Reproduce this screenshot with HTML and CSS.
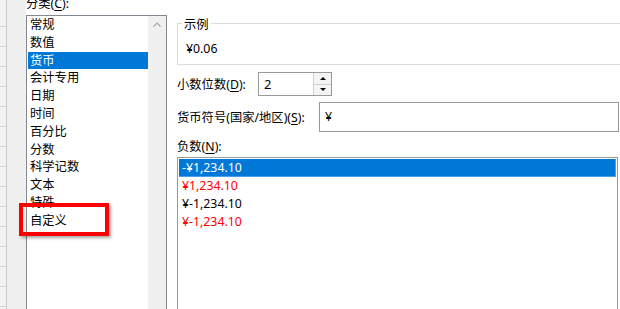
FILE: index.html
```html
<!DOCTYPE html>
<html lang="zh-CN">
<head>
    <meta charset="UTF-8">
    <meta name="viewport" content="width=device-width, initial-scale=1.0">
    <title>设置单元格格式</title>
    <link rel="stylesheet" href="styles.css">
</head>
<body>
    <div class="window">
        <div class="sheet"></div> <!-- edge of the worksheet behind the dialog -->

        <div class="dialog">
            <div class="category">
                <div class="caption">分类(<u>C</u>):</div>
                <div class="listbox">
                    <ul class="items">
                        <li>常规</li>
                        <li>数值</li>
                        <li class="selected">货币</li>
                        <li>会计专用</li>
                        <li>日期</li>
                        <li>时间</li>
                        <li>百分比</li>
                        <li>分数</li>
                        <li>科学记数</li>
                        <li>文本</li>
                        <li>特殊</li>
                        <li class="marked">自定义</li>
                    </ul>
                    <div class="scrollbar">
                        <svg class="chevron" width="8" height="5" viewBox="0 0 8 5">
                            <path d="M0.5 4.5 L4 1 L7.5 4.5" fill="none" stroke="#a6a6a6" stroke-width="1.2"/>
                        </svg>
                    </div>
                </div>
            </div>

            <div class="settings">
                <div class="sample">
                    <div class="sample-title">示例</div>
                    <div class="sample-value">¥0.06</div>
                </div>

                <div class="field decimals">
                    <label>小数位数(<u>D</u>):</label>
                    <div class="spin">
                        <span class="spin-value">2</span>
                        <div class="spin-buttons">
                            <span class="spin-up"></span>
                            <span class="spin-down"></span>
                        </div>
                    </div>
                </div>

                <div class="field symbol-row">
                    <label>货币符号(国家/地区)(<u>S</u>):</label>
                    <div class="symbol">¥</div>
                </div>

                <div class="caption">负数(<u>N</u>):</div>
                <ul class="negatives">
                    <li class="selected">-¥1,234.10</li>
                    <li class="red">¥1,234.10</li>
                    <li>¥-1,234.10</li>
                    <li class="red">¥-1,234.10</li>
                </ul>
            </div>
        </div>
    </div>
</body>
</html>
```

FILE: styles.css
```css
body {
    margin: 0;
    font-family: "Noto Sans", "Noto Sans CJK SC", sans-serif;
    font-size: 12.3px;
    color: #000;
    background-color: #fff;
    overflow: hidden;
}

u {
    text-decoration-thickness: 1px;
    text-underline-offset: 2px;
}

.window {
    display: flex;
    width: 620px;
    height: 309px;
    overflow: hidden;
}

/* worksheet grid peeking out on the left */
.sheet {
    flex: none;
    width: 6px;
    border-right: 1px solid #c8c8c8;
    background-color: #f2f2f2;
    background-image: repeating-linear-gradient(to bottom, transparent 0, transparent 19px, #d4d4d4 19px, #d4d4d4 20px);
    background-position: 0 7px;
}

.dialog {
    flex: 1;
    display: flex;
    min-width: 0;
}

.caption {
    line-height: 18px;
    height: 18px;
    white-space: nowrap;
}

/* left column: category list */
.category {
    flex: none;
    width: 141px;
    padding-left: 19px;
    background: linear-gradient(to right, #f0f0f0 19px, #fff 19px);
}

.category .caption {
    margin-top: -5px;
    margin-bottom: 2px;
}

.listbox {
    display: flex;
    height: 320px;
    border: 1px solid #828790;
    background-color: #fff;
}

.items {
    flex: 1;
    list-style: none;
    margin: 0;
    padding: 0 0 0 1px;
}

.items li {
    height: 17.8px;
    line-height: 17.8px;
    padding-left: 2px;
    white-space: nowrap;
}

.items li.selected {
    background-color: #0078d7;
    color: #fff;
}

.items li.marked {
    position: relative;
}

/* red annotation frame around 自定义 */
.items li.marked::after {
    content: "";
    position: absolute;
    left: -9px;
    top: -9px;
    width: 90px;
    height: 33px;
    box-sizing: border-box;
    border: 4px solid #f00;
    box-shadow: 2px 2px 3px rgba(0, 0, 0, 0.35);
}

.scrollbar {
    flex: none;
    width: 18px;
    background-color: #f0f0f0;
    display: flex;
    justify-content: center;
    align-items: flex-start;
}

.chevron {
    margin-top: 6px;
}

/* right column */
.settings {
    flex: 1;
    min-width: 0;
    padding: 23px 0 0 10px;
}

.sample {
    height: 42px;
    box-sizing: border-box;
    border: 1px solid #dcdcdc;
    border-right: none;
    margin-right: -10px;
}

.sample-title {
    width: fit-content;
    line-height: 18px;
    margin: -8px 0 0 4px;
    padding: 0 2px;
    background-color: #fff;
}

.sample-value {
    line-height: 18px;
    margin-top: 6px;
    padding-left: 8px;
}

.field {
    display: flex;
    align-items: center;
    white-space: nowrap;
}

.decimals {
    margin-top: 7px;
}

.decimals label {
    width: 81px;
}

.symbol-row {
    margin-top: 6px;
}

.symbol-row label {
    width: 142px;
}

.spin {
    display: flex;
    width: 74px;
    height: 24px;
    box-sizing: border-box;
    border: 1px solid #9a9a9a;
}

.spin-value {
    flex: 1;
    padding-left: 5px;
    line-height: 22px;
    font-size: 13px;
}

.spin-buttons {
    width: 17px;
    display: flex;
    flex-direction: column;
    border-left: 1px solid #d0d0d0;
}

.spin-up,
.spin-down {
    flex: 1;
    display: flex;
    justify-content: center;
    align-items: center;
    background-color: #f4f4f4;
}

.spin-up {
    border-bottom: 1px solid #d0d0d0;
}

.spin-up::before {
    content: "";
    border-left: 3px solid transparent;
    border-right: 3px solid transparent;
    border-bottom: 3px solid #000;
}

.spin-down::before {
    content: "";
    border-left: 3px solid transparent;
    border-right: 3px solid transparent;
    border-top: 3px solid #000;
}

.symbol {
    width: 300px;
    height: 30px;
    box-sizing: border-box;
    border: 1px solid #9a9a9a;
    padding-left: 5px;
    line-height: 28px;
}

.settings .caption {
    margin-top: 6px;
}

.negatives {
    list-style: none;
    width: 441px;
    height: 200px;
    box-sizing: border-box;
    margin: 1px 0 0;
    padding: 1px;
    border: 1px solid #9a9a9a;
}

.negatives li {
    height: 18px;
    line-height: 18px;
    padding-left: 3px;
    white-space: nowrap;
}

.negatives li.selected {
    background-color: #0078d7;
    color: #fff;
    box-shadow: inset -1px -1px 0 #4aa0ec;
}

.negatives li.red {
    color: #f00;
}
```
